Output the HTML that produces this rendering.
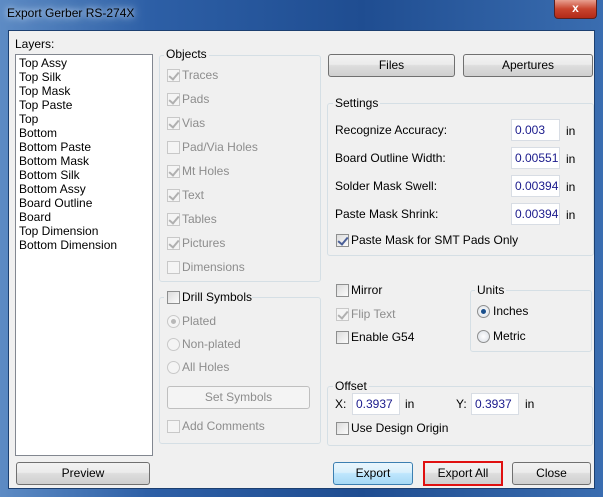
<!DOCTYPE html>
<html><head><meta charset="utf-8"><style>
*{box-sizing:border-box;margin:0;padding:0}
body{width:603px;height:497px;overflow:hidden;background:#2a5a9a;font-family:"Liberation Sans",sans-serif;font-size:12px;color:#000;position:relative}
.frame{position:absolute;left:0;top:0;width:603px;height:497px;background:linear-gradient(90deg,#5d8bc4 0%,#2d5fa6 25%,#1f4d91 60%,#3a6db0 100%)}
.title{position:absolute;left:7px;top:6px;color:#000;font-size:12px;text-shadow:0 0 6px #cfe0f5,0 0 10px #cfe0f5}
.xbtn{position:absolute;left:554px;top:0;width:43px;height:19px;border:1px solid #5a2020;border-top:none;border-radius:0 0 4px 4px;background:linear-gradient(#e8a090,#c8442e 50%,#b22a18);color:#fff;font-weight:bold;text-align:center;font-size:12px;line-height:17px}
.client{position:absolute;left:8px;top:30px;width:587px;height:459px;background:#f0f0f0;border:1px solid #1c3f70}
.a{position:absolute;white-space:nowrap}
.list{position:absolute;left:15px;top:54px;width:138px;height:402px;background:#fff;border:1px solid #828790;padding:1px 3px;line-height:14px}
.gb{position:absolute;border:1px solid #d5dfe5;border-radius:3px}
.gl{position:absolute;background:#f0f0f0;padding:0 2px;white-space:nowrap}
.cb{position:absolute;width:13px;height:13px;border:1px solid #8e8f8f;background:linear-gradient(135deg,#dcdcdc,#fbfbfb)}
.cb.d{border-color:#c8c8c8;background:#f4f4f4}
.ck::after{content:"";position:absolute;left:3px;top:0px;width:4px;height:8px;border:solid #4a5f97;border-width:0 2px 2px 0;transform:rotate(40deg)}
.ck.d::after{border-color:#b0b0b0}
.dis{color:#8d8d8d}
.rb{position:absolute;width:13px;height:13px;border-radius:50%;border:1px solid #8e8f8f;background:radial-gradient(#fff,#d8dde4)}
.rb.d{border-color:#c8c8c8;background:#f4f4f4}
.rb.on::after{content:"";position:absolute;left:3px;top:3px;width:5px;height:5px;border-radius:50%;background:#1a4f8c}
.rb.don::after{content:"";position:absolute;left:3px;top:3px;width:5px;height:5px;border-radius:50%;background:#b8b8b8}
.btn{position:absolute;border:1px solid #707070;border-radius:3px;background:linear-gradient(#f2f2f2 0%,#ebebeb 45%,#dddddd 50%,#cfcfcf 100%);text-align:center}
.inp{position:absolute;background:#fff;border:1px solid #d8dde4;color:#1a1a8c;padding-left:3px;overflow:hidden;white-space:nowrap}
</style></head><body>
<div class="frame"></div>
<div class="title">Export Gerber RS-274X</div>
<div class="xbtn">x</div>
<div class="client"></div>

<div class="a" style="left:15px;top:37px">Layers:</div>
<div class="list">Top Assy<br>Top Silk<br>Top Mask<br>Top Paste<br>Top<br>Bottom<br>Bottom Paste<br>Bottom Mask<br>Bottom Silk<br>Bottom Assy<br>Board Outline<br>Board<br>Top Dimension<br>Bottom Dimension</div>

<div class="gb" style="left:159px;top:55px;width:162px;height:227px"></div>
<div class="gl" style="left:164px;top:47px">Objects</div>
<div class="cb d ck" style="left:167px;top:69px"></div><div class="a dis" style="left:182px;top:68px">Traces</div>
<div class="cb d ck" style="left:167px;top:93px"></div><div class="a dis" style="left:182px;top:92px">Pads</div>
<div class="cb d ck" style="left:167px;top:117px"></div><div class="a dis" style="left:182px;top:116px">Vias</div>
<div class="cb d" style="left:167px;top:141px"></div><div class="a dis" style="left:182px;top:140px">Pad/Via Holes</div>
<div class="cb d ck" style="left:167px;top:165px"></div><div class="a dis" style="left:182px;top:164px">Mt Holes</div>
<div class="cb d ck" style="left:167px;top:189px"></div><div class="a dis" style="left:182px;top:188px">Text</div>
<div class="cb d ck" style="left:167px;top:213px"></div><div class="a dis" style="left:182px;top:212px">Tables</div>
<div class="cb d ck" style="left:167px;top:237px"></div><div class="a dis" style="left:182px;top:236px">Pictures</div>
<div class="cb d" style="left:167px;top:261px"></div><div class="a dis" style="left:182px;top:260px">Dimensions</div>

<div class="gb" style="left:159px;top:297px;width:162px;height:147px"></div>
<div class="gl" style="left:164px;top:290px;width:88px;height:15px"></div>
<div class="cb" style="left:167px;top:291px"></div><div class="a" style="left:182px;top:290px">Drill Symbols</div>
<div class="rb d don" style="left:167px;top:315px"></div><div class="a dis" style="left:182px;top:314px">Plated</div>
<div class="rb d" style="left:167px;top:338px"></div><div class="a dis" style="left:182px;top:337px">Non-plated</div>
<div class="rb d" style="left:167px;top:361px"></div><div class="a dis" style="left:182px;top:360px">All Holes</div>
<div class="btn dis" style="left:167px;top:386px;width:143px;height:23px;line-height:21px;border-color:#bfbfbf;background:#f4f4f4">Set Symbols</div>
<div class="cb d" style="left:167px;top:420px"></div><div class="a dis" style="left:182px;top:419px">Add Comments</div>

<div class="btn" style="left:328px;top:54px;width:127px;height:23px;line-height:21px">Files</div>
<div class="btn" style="left:463px;top:54px;width:130px;height:23px;line-height:21px">Apertures</div>

<div class="gb" style="left:327px;top:103px;width:267px;height:153px"></div>
<div class="gl" style="left:333px;top:96px">Settings</div>
<div class="a" style="left:335px;top:123px">Recognize Accuracy:</div>
<div class="inp" style="left:511px;top:119px;width:49px;height:22px;line-height:20px">0.003</div><div class="a" style="left:566px;top:124px">in</div>
<div class="a" style="left:335px;top:151px">Board Outline Width:</div>
<div class="inp" style="left:511px;top:147px;width:49px;height:22px;line-height:20px">0.00551</div><div class="a" style="left:566px;top:152px">in</div>
<div class="a" style="left:335px;top:179px">Solder Mask Swell:</div>
<div class="inp" style="left:511px;top:175px;width:49px;height:22px;line-height:20px">0.00394</div><div class="a" style="left:566px;top:180px">in</div>
<div class="a" style="left:335px;top:207px">Paste Mask Shrink:</div>
<div class="inp" style="left:511px;top:203px;width:49px;height:22px;line-height:20px">0.00394</div><div class="a" style="left:566px;top:208px">in</div>
<div class="cb ck" style="left:336px;top:234px"></div><div class="a" style="left:351px;top:233px">Paste Mask for SMT Pads Only</div>

<div class="cb" style="left:336px;top:284px"></div><div class="a" style="left:351px;top:283px">Mirror</div>
<div class="cb d ck" style="left:336px;top:308px"></div><div class="a dis" style="left:351px;top:307px">Flip Text</div>
<div class="cb" style="left:336px;top:331px"></div><div class="a" style="left:351px;top:330px">Enable G54</div>

<div class="gb" style="left:470px;top:290px;width:122px;height:62px"></div>
<div class="gl" style="left:475px;top:283px">Units</div>
<div class="rb on" style="left:477px;top:305px"></div><div class="a" style="left:493px;top:304px">Inches</div>
<div class="rb" style="left:477px;top:330px"></div><div class="a" style="left:493px;top:329px">Metric</div>

<div class="gb" style="left:327px;top:386px;width:266px;height:60px"></div>
<div class="gl" style="left:333px;top:379px">Offset</div>
<div class="a" style="left:335px;top:397px">X:</div>
<div class="inp" style="left:352px;top:393px;width:48px;height:22px;line-height:20px">0.3937</div><div class="a" style="left:405px;top:397px">in</div>
<div class="a" style="left:456px;top:397px">Y:</div>
<div class="inp" style="left:471px;top:393px;width:48px;height:22px;line-height:20px">0.3937</div><div class="a" style="left:525px;top:397px">in</div>
<div class="cb" style="left:336px;top:422px"></div><div class="a" style="left:351px;top:421px">Use Design Origin</div>

<div class="btn" style="left:16px;top:462px;width:134px;height:23px;line-height:21px">Preview</div>
<div class="btn" style="left:333px;top:462px;width:80px;height:23px;line-height:21px;border-color:#3c7fb1;background:linear-gradient(#eaf6fd,#d9f0fc 45%,#bee6fd 50%,#a7d9f5)">Export</div>
<div class="btn" style="left:423px;top:461px;width:80px;height:25px;line-height:21px;border:2px solid #e01010;border-radius:0">Export All</div>
<div class="btn" style="left:512px;top:462px;width:79px;height:23px;line-height:21px">Close</div>
</body></html>
